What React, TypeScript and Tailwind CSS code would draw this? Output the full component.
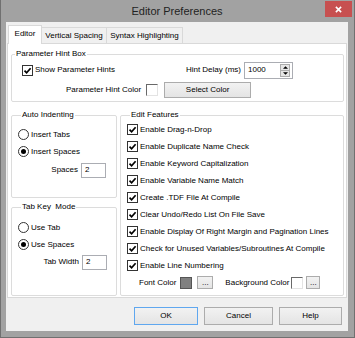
import type { ReactNode } from "react";

function CheckBox({ label }: { label: string }) {
  return (
    <div className="flex items-center gap-[2px] h-[17px]">
      <span className="w-[11px] h-[11px] border border-[#333] bg-white flex items-center justify-center shrink-0">
        <svg viewBox="0 0 9 9" className="w-[9px] h-[9px]">
          <path d="M1.5 4.6 L3.6 6.8 L7.6 2.2" stroke="#000" strokeWidth="1.7" fill="none" />
        </svg>
      </span>
      <span>{label}</span>
    </div>
  );
}

function Radio({ label, checked }: { label: string; checked?: boolean }) {
  return (
    <div className="flex items-center gap-[2px] h-[17px]">
      <span className="w-[11px] h-[11px] rounded-full border border-[#333] bg-white flex items-center justify-center shrink-0">
        {checked && <span className="w-[5px] h-[5px] rounded-full bg-black" />}
      </span>
      <span>{label}</span>
    </div>
  );
}

function Group({ title, className, children }: { title: string; className?: string; children: ReactNode }) {
  return (
    <fieldset className={"border border-[#dcdcdc] rounded-[2px] min-w-0 " + (className ?? "")}>
      <legend className="ml-[3px] px-[1px] leading-[10px] whitespace-pre">{title}</legend>
      {children}
    </fieldset>
  );
}

function Field({ value, className }: { value: string; className: string }) {
  return (
    <div className={"border border-[#abadb3] bg-white flex items-center pl-[3px] " + className}>{value}</div>
  );
}

function Button({ label, className }: { label: string; className: string }) {
  return (
    <button className={"border bg-gradient-to-b from-[#f2f2f2] to-[#e4e4e4] flex items-center justify-center " + className}>
      {label}
    </button>
  );
}

const features = [
  "Enable Drag-n-Drop",
  "Enable Duplicate Name Check",
  "Enable Keyword Capitalization",
  "Enable Variable Name Match",
  "Create .TDF File At Compile",
  "Clear Undo/Redo List On File Save",
  "Enable Display Of Right Margin and Pagination Lines",
  "Check for Unused Variables/Subroutines At Compile",
  "Enable Line Numbering",
];

export default function App() {
  return (
    <div className="w-[355px] h-[338px] flex flex-col bg-[#a2a2a2] border-x border-b border-[#707070] pl-[5px] pr-[6px] pb-[6px] text-[8px] leading-[10px] text-black font-['Liberation_Sans',Arial,sans-serif]">
      {/* title bar */}
      <div className="grid grid-cols-[1fr_auto_1fr] h-[22px] shrink-0">
        <div />
        <div className="self-center text-[11px] leading-[13px] text-[#222]">Editor Preferences</div>
        <div className="justify-self-end self-start mt-[1px] -mr-[4px] w-[27px] h-[16px] bg-[#c75050] flex items-center justify-center">
          <svg viewBox="0 0 8 8" className="w-[7px] h-[7px]">
            <path d="M1 1 L7 7 M7 1 L1 7" stroke="#fff" strokeWidth="1.8" />
          </svg>
        </div>
      </div>

      {/* client */}
      <div className="flex-1 flex flex-col bg-[#f0f0f0]">
        <div className="h-[22px] -mb-px flex items-end pl-[2px] shrink-0">
          <div className="relative z-10 h-[19px] w-[34px] bg-white border-x border-t border-[#d9d9d9] flex items-center justify-center pb-[2px]">
            Editor
          </div>
          <div className="h-[17px] w-[66px] -ml-px bg-[#f0f0f0] border border-[#d9d9d9] flex items-center justify-center">
            Vertical Spacing
          </div>
          <div className="h-[17px] w-[77px] -ml-px bg-[#f0f0f0] border border-[#d9d9d9] flex items-center justify-center">
            Syntax Highlighting
          </div>
        </div>

        <div className="h-[255px] mx-[1px] bg-white border border-[#d9d9d9] pl-[3px] pr-[2px] pt-[5px] pb-[1px] flex flex-col">
          <Group title="Parameter Hint Box" className="pb-[3px]">
            <div className="mt-[2px] h-[18px] flex items-center pl-[10px] pr-[50px]">
              <CheckBox label="Show Parameter Hints" />
              <span className="ml-auto">Hint Delay (ms)</span>
              <div className="ml-[3px] w-[49px] h-[17px] border border-[#abadb3] bg-white flex items-center pl-[3px] pr-[2px]">
                <span className="flex-1">1000</span>
                <div className="w-[10px] h-[13px] flex flex-col">
                  <div className="flex-1 border border-[#acacac] bg-[#e6e6e6] flex items-center justify-center">
                    <svg viewBox="0 0 6 3" className="w-[5px] h-[3px]"><path d="M0 3 L3 0 L6 3 Z" fill="#000" /></svg>
                  </div>
                  <div className="flex-1 border border-t-0 border-[#acacac] bg-[#e6e6e6] flex items-center justify-center">
                    <svg viewBox="0 0 6 3" className="w-[5px] h-[3px]"><path d="M0 0 L3 3 L6 0 Z" fill="#000" /></svg>
                  </div>
                </div>
              </div>
            </div>
            <div className="mt-[3px] h-[16px] flex items-center pl-[54px]">
              <span>Parameter Hint Color</span>
              <span className="ml-[5px] w-[12px] h-[12px] bg-white border-t border-l border-[#696969] border-r border-b border-r-[#e3e3e3] border-b-[#e3e3e3]" />
              <Button label="Select Color" className="ml-[6px] w-[87px] h-[16px] border-[#acacac]" />
            </div>
          </Group>

          <div className="mt-[8px] flex-1 flex gap-[3px]">
            <div className="w-[106px] flex flex-col gap-[4px]">
              <Group title="Auto Indenting" className="h-[88px] pl-[6px]">
                <div className="pt-[6px]">
                  <Radio label="Insert Tabs" />
                  <Radio label="Insert Spaces" checked />
                  <div className="mt-[2px] h-[16px] flex items-center justify-end gap-[3px] pr-[10px]">
                    <span>Spaces</span>
                    <Field value="2" className="w-[25px] h-[15px]" />
                  </div>
                </div>
              </Group>
              <Group title="Tab Key  Mode" className="flex-1 pl-[6px]">
                <div className="pt-[7px]">
                  <Radio label="Use Tab" />
                  <Radio label="Use Spaces" checked />
                  <div className="mt-[1px] h-[16px] flex items-center justify-end gap-[3px] pr-[9px]">
                    <span>Tab Width</span>
                    <Field value="2" className="w-[25px] h-[15px]" />
                  </div>
                </div>
              </Group>
            </div>

            <Group title="Edit Features" className="flex-1 pl-[6px]">
              <div className="pt-[1px]">
                {features.map((f) => (
                  <CheckBox key={f} label={f} />
                ))}
                <div className="h-[17px] flex items-center pl-[12px]">
                  <span>Font Color</span>
                  <span className="ml-[4px] w-[12px] h-[12px] bg-[#808080] border border-[#555]" />
                  <Button label="..." className="ml-[5px] w-[16px] h-[13px] border-[#acacac]" />
                  <span className="ml-[12px]">Background Color</span>
                  <span className="ml-[2px] w-[12px] h-[12px] bg-white border-t border-l border-[#696969] border-r border-b border-r-[#e3e3e3] border-b-[#e3e3e3]" />
                  <Button label="..." className="ml-[3px] w-[14px] h-[13px] border-[#acacac]" />
                </div>
              </div>
            </Group>
          </div>
        </div>

        <div className="flex-1 flex items-start justify-end gap-[6px] pt-[9px] pr-[6px]">
          <Button label="OK" className="w-[64px] h-[18px] border-[#5fa7ef]" />
          <Button label="Cancel" className="w-[69px] h-[18px] border-[#acacac]" />
          <Button label="Help" className="w-[63px] h-[18px] border-[#acacac]" />
        </div>
      </div>
    </div>
  );
}
